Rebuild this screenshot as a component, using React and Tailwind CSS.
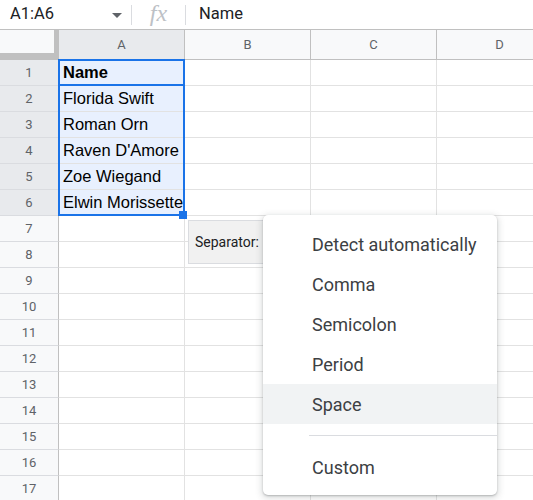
import React from "react"

const names = ["Name", "Florida Swift", "Roman Orn", "Raven D'Amore", "Zoe Wiegand", "Elwin Morissette"]
const cols = ["A", "B", "C", "D"]
const rows = Array.from({ length: 17 }, (_, i) => i + 1)
const options = ["Detect automatically", "Comma", "Semicolon", "Period", "Space"]

const FormulaBar = () => (
    <div className="flex items-center h-[30px] border-b border-[#c0c0c0] bg-white text-[16.5px] text-[#202124]">
        <div className="w-[131px] flex items-center justify-between pl-[10px] pr-[9px] h-full">
            <span>A1:A6</span>
            <svg width="10" height="5" viewBox="0 0 10 5" className="mt-[1px]">
                <path d="M0 0 L10 0 L5 5 Z" fill="#5f6368" />
            </svg>
        </div>
        <div className="w-px h-[20px] bg-[#dadce0]" />
        <div className="w-[53px] flex justify-center">
            <span className="italic text-[24px] leading-none text-[#bdc1c6] font-['Liberation_Serif',serif] -mt-[3px]">fx</span>
        </div>
        <div className="w-px h-[20px] bg-[#dadce0]" />
        <span className="pl-[13px]">Name</span>
    </div>
)

const Sheet = () => (
    <div className="grid grid-cols-[59px_126px_126px_126px_126px] grid-rows-[30px_repeat(17,26px)]">
        <div className="bg-[#f8f9fa] border-r-[5px] border-b-[7px] border-[#c0c0c0]" />
        {cols.map((c) => (
            <div
                key={c}
                className={`flex items-center justify-center border-r border-b border-[#c0c0c0] text-[13px] text-[#5f6368] ${c === "A" ? "bg-[#e8eaed] text-[#3c4043]" : "bg-[#f8f9fa]"}`}
            >
                {c}
            </div>
        ))}
        {rows.map((r) => (
            <React.Fragment key={r}>
                <div
                    className={`flex items-center justify-center border-r border-b border-r-[#c0c0c0] border-b-[#dadce0] text-[13px] text-[#5f6368] ${r <= 6 ? "bg-[#e8eaed]" : "bg-[#f8f9fa]"}`}
                >
                    {r}
                </div>
                {cols.map((c) => (
                    <div
                        key={c}
                        className={`flex items-center pl-[4px] border-r border-b border-[#e2e2e2] text-[16.5px] text-black font-['Liberation_Sans',Arial,sans-serif] whitespace-nowrap overflow-visible ${c === "A" && r <= 6 ? "bg-[#e8f0fe]" : "bg-white"} ${c === "A" && r === 1 ? "font-bold" : ""}`}
                    >
                        {c === "A" && r <= 6 ? names[r - 1] : ""}
                    </div>
                ))}
            </React.Fragment>
        ))}
    </div>
)

export default function App() {
    return (
        <div className="relative w-[533px] h-[500px] overflow-hidden bg-white font-['Roboto','Liberation_Sans',sans-serif]">
            <FormulaBar />
            <Sheet />

            {/* selection */}
            <div className="absolute left-[58px] top-[59px] w-[127px] h-[157px] border-2 border-[#1a73e8]" />
            <div className="absolute left-[58px] top-[59px] w-[127px] h-[27px] border-2 border-[#1a73e8]" />
            <div className="absolute left-[179px] top-[211px] w-[8px] h-[8px] bg-[#1a73e8]" />

            {/* separator chip */}
            <div className="absolute left-[188px] top-[220px] w-[110px] h-[44px] flex items-center pl-[6px] bg-[#f1f1f1] border border-[#dadce0] text-[14px] text-[#202124]">
                Separator:
            </div>

            {/* menu */}
            <div className="absolute left-[263px] top-[215px] w-[234px] pt-[9px] pb-[8px] bg-white rounded-[5px] shadow-[0_2px_6px_2px_rgba(60,64,67,0.15),0_1px_2px_rgba(60,64,67,0.3)] text-[18px] text-[#3c4043]">
                {options.map((o) => (
                    <div
                        key={o}
                        className={`h-[40px] flex items-center pl-[49px] ${o === "Space" ? "bg-[#f1f3f4]" : ""}`}
                    >
                        {o}
                    </div>
                ))}
                <div className="ml-[46px] my-[11px] h-px bg-[#dadce0]" />
                <div className="h-[40px] flex items-center pl-[49px]">Custom</div>
            </div>
        </div>
    )
}
